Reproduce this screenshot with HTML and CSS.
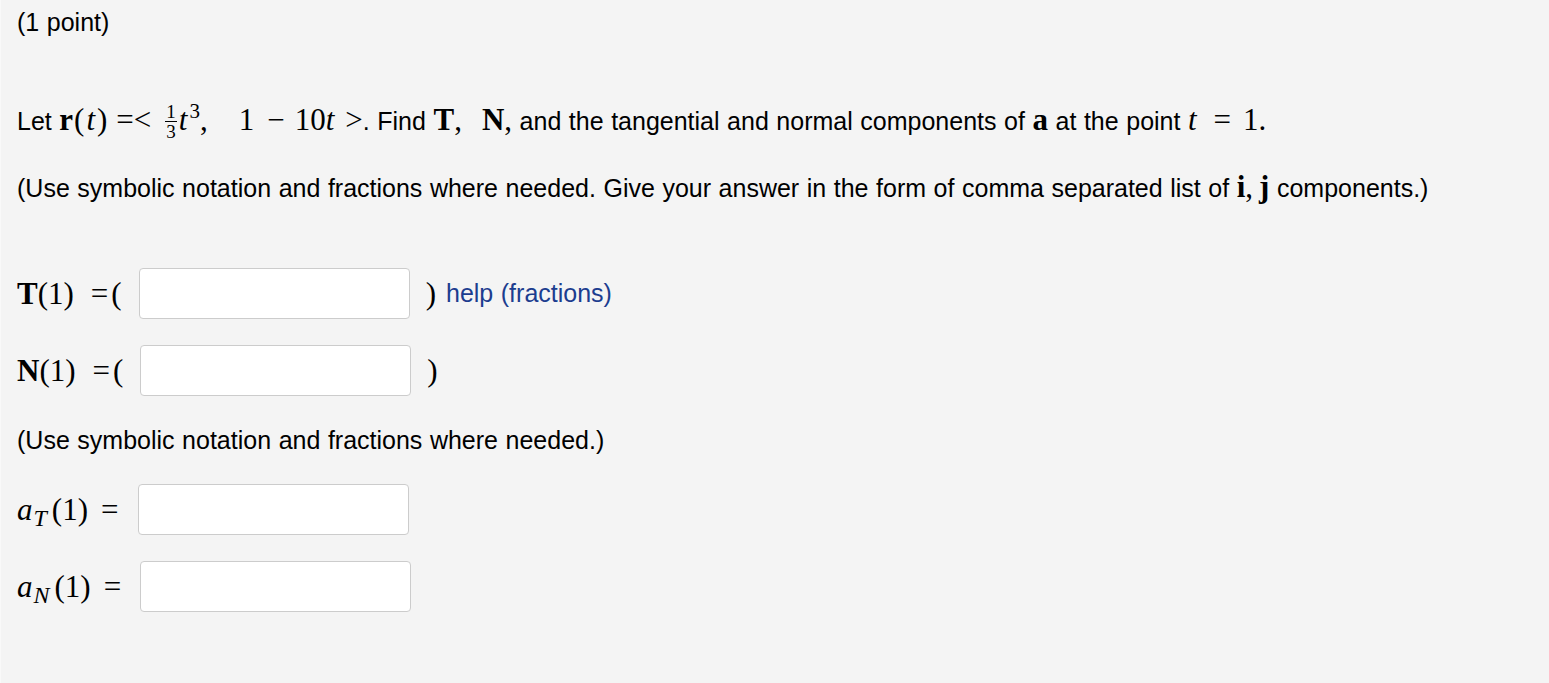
FILE: index.html
```html
<!DOCTYPE html>
<html>
<head>
<meta charset="utf-8">
<link rel="stylesheet" href="styles.css">
</head>
<body>
<div class="page">
  <div class="points">(1 point)</div>

  <div class="line problem">Let <span class="m"><b class="mb">r</b><span class="pl">(</span><i>t</i><span class="pr">)</span><span class="rel">=&lt;</span><span class="frac"><span class="num">1</span><span class="den">3</span></span><i>t</i><sup>3</sup>,<span class="gap-l"></span>1<span class="bin">−</span>10<i>t</i><span class="gt">&gt;</span></span>. Find <span class="m"><b class="mb">T</b>,<span class="gap-m"></span><b class="mb">N</b>,</span> and the tangential and normal components of <span class="m"><b class="mb">a</b></span> at the point <span class="m"><i>t</i><span class="rel2">=</span>1.</span></div>

  <div class="line note1">(Use symbolic notation and fractions where needed. Give your answer in the form of comma separated list of <span class="m"><b class="mb">i</b>,<span class="gap-s"></span><b class="mb">j</b></span> components.)</div>

  <div class="row row-t">
    <span class="m label"><b class="mb">T</b>(1)<span class="rel3">=</span>(</span>
    <input class="answer" type="text">
    <span class="m close">)</span>
    <a class="help" href="#">help (fractions)</a>
  </div>

  <div class="row row-n">
    <span class="m label"><b class="mb">N</b>(1)<span class="rel3">=</span>(</span>
    <input class="answer" type="text">
    <span class="m close">)</span>
  </div>

  <div class="line note2">(Use symbolic notation and fractions where needed.)</div>

  <div class="row row-at">
    <span class="m label"><i>a</i><sub><i>T</i></sub>(1)<span class="rel4">=</span></span>
    <input class="answer" type="text">
  </div>

  <div class="row row-an">
    <span class="m label"><i>a</i><sub><i>N</i></sub>(1)<span class="rel4">=</span></span>
    <input class="answer" type="text">
  </div>
</div>
</body>
</html>
```

FILE: styles.css
```css
html, body {
  margin: 0;
  padding: 0;
  background: #f4f4f4;
}

body {
  font-family: "Liberation Sans", Arial, sans-serif;
  font-size: 25px;
  word-spacing: 0.6px;
  color: #000;
  min-height: 683px;
  border-left: 1px solid #f9f9f9;
  box-sizing: border-box;
}

.page {
  padding: 0 0 0 16px;
}

.points {
  line-height: 30px;
  padding-top: 7px;
}

.line {
  line-height: 36px;
  height: 36px;
  white-space: nowrap;
}

.problem {
  margin-top: 66px;
}

.note1 {
  margin-top: 31px;
}

.note2 {
  margin-top: 26px;
}

.m {
  font-family: "Liberation Serif", "DejaVu Serif", serif;
  font-size: 31px;
  line-height: 1;
  word-spacing: 0;
}

.m i {
  font-style: italic;
}

.mb {
  font-weight: bold;
  font-style: normal;
}

.pl {
  margin: 0 2px 0 1px;
}

.pr {
  margin: 0 0 0 2px;
}

.rel {
  margin: 0 14px 0 9px;
}

.rel2 {
  margin: 0 12px 0 17px;
}

.rel3 {
  margin: 0 3px 0 17px;
}

.rel4 {
  margin: 0 2px 0 13px;
}

.bin {
  margin: 0 10px 0 13px;
}

.gt {
  margin-left: 11px;
}

.gap-l {
  display: inline-block;
  width: 31px;
}

.gap-m {
  display: inline-block;
  width: 20px;
}

.gap-s {
  display: inline-block;
  width: 6px;
}

.frac {
  display: inline-flex;
  flex-direction: column;
  align-items: center;
  vertical-align: middle;
  font-size: 19px;
  line-height: 16px;
  margin: 0 2px 0 0;
  position: relative;
  top: -1px;
}

.frac .num {
  border-bottom: 1px solid #000;
  padding: 0 1px 1px;
}

.frac .den {
  padding-top: 2px;
}

sup {
  font-size: 21px;
  line-height: 0;
  vertical-align: 12px;
  margin-left: 2px;
}

sub {
  font-size: 24px;
  line-height: 0;
  vertical-align: -6px;
  margin-left: 1px;
  margin-right: 5px;
}

.row {
  display: flex;
  align-items: center;
  height: 51px;
}

.row-t {
  margin-top: 62px;
}

.row-n {
  margin-top: 26px;
}

.row-at {
  margin-top: 26px;
}

.row-an {
  margin-top: 26px;
}

.label {
  white-space: nowrap;
}

.answer {
  box-sizing: border-box;
  width: 271px;
  height: 51px;
  margin: 0 0 0 17px;
  border: 1px solid #cccccc;
  border-radius: 4px;
  background: #fff;
  font-size: 20px;
  padding: 4px 8px;
  outline: none;
}

.close {
  margin-left: 16px;
}

.help {
  margin-left: 10px;
  color: #1c3d8f;
  text-decoration: none;
  font-family: "Liberation Sans", Arial, sans-serif;
  font-size: 25px;
}
```
